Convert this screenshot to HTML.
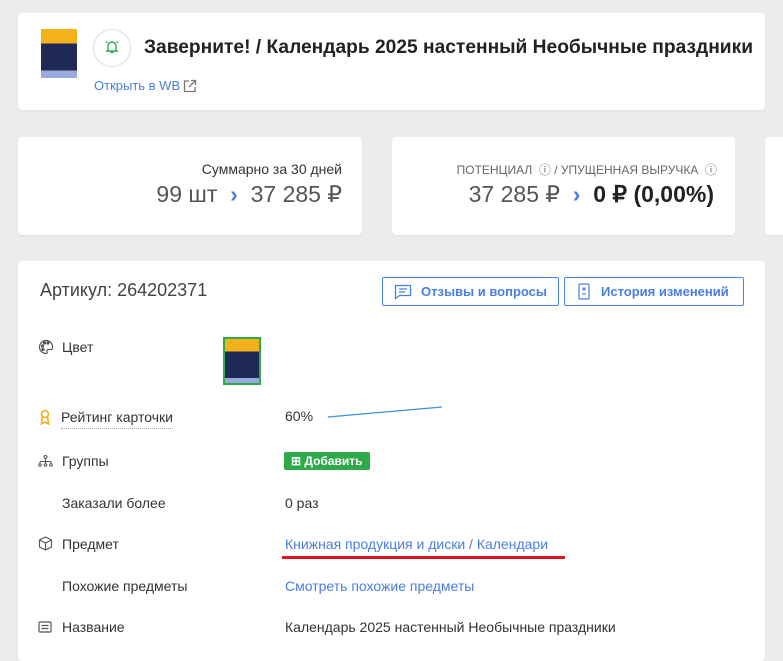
<!DOCTYPE html>
<html><head><meta charset="utf-8"><style>
body{margin:0;background:#ececec;font-family:"Liberation Sans",Arial,sans-serif;color:#333;width:783px;height:647px;overflow:hidden;position:relative}
.card{position:absolute;background:#fff;border-radius:4px;box-shadow:0 1px 2px rgba(0,0,0,.06)}
.a{position:absolute;white-space:nowrap}
.lbl{font-size:14px;color:#333}
.btn{position:absolute;height:29px;border:1px solid #4a86e8;border-radius:2px;color:#4a7ee0;font-weight:bold;font-size:13px;box-sizing:border-box;display:flex;align-items:center}
.cover{position:absolute;background:linear-gradient(#f3b21b 0 30%,#1e2a55 30% 85%,#9ad 85%)}
</style></head><body>
<div class="card" style="left:18px;top:13px;width:747px;height:97px"></div>
<div class="cover" style="left:41px;top:29px;width:36px;height:49px"></div>
<div class="a" style="left:93px;top:29px;width:38px;height:38px;border:1px solid #ddd;border-radius:50%;box-sizing:border-box"></div>
<svg class="a" style="left:104px;top:39px" width="16" height="16" viewBox="0 0 16 16" fill="none" stroke="#2eaa4a" stroke-width="1.4"><path d="M4 11V7a4 4 0 0 1 8 0v4l1 1H3z M6.5 13.5h3 M2 4l1.5-1.5 M14 4l-1.5-1.5"/></svg>
<div class="a" style="left:144px;top:37px;font-size:19.2px;font-weight:bold;color:#222">Заверните! / Календарь 2025 настенный Необычные праздники</div>
<div class="a" style="left:94px;top:78px;font-size:13px;color:#4a7ee0">Открыть в WB</div>
<svg class="a" style="left:183px;top:79px" width="14" height="14" viewBox="0 0 14 14" fill="none" stroke="#777" stroke-width="1.3"><path d="M6 2H1.5v10.5H12V8 M8 1.5h4.5V6 M12.5 1.5L6 8"/></svg>

<div class="card" style="left:18px;top:137px;width:344px;height:98px"></div>
<div class="a" style="right:441px;top:161px;font-size:14px">Суммарно за 30 дней</div>
<div class="a" style="right:441px;top:181px;font-size:23px;color:#555">99 шт <span style="color:#4a7ee0;font-weight:bold">&nbsp;›&nbsp;</span> 37 285 ₽</div>

<div class="card" style="left:392px;top:137px;width:343px;height:98px"></div>
<div class="a" style="right:66px;top:161px;font-size:12px;color:#666">ПОТЕНЦИАЛ &nbsp;ⓘ / УПУЩЕННАЯ ВЫРУЧКА &nbsp;ⓘ</div>
<div class="a" style="right:69px;top:181px;font-size:23px;color:#555">37 285 ₽ <span style="color:#4a7ee0;font-weight:bold">&nbsp;›&nbsp;</span> <b style="color:#222">0 ₽ (0,00%)</b></div>
<div class="card" style="left:765px;top:137px;width:30px;height:98px"></div>

<div class="card" style="left:18px;top:261px;width:747px;height:400px"></div>
<div class="a" style="left:40px;top:280px;font-size:18px;color:#444">Артикул: 264202371</div>
<div class="btn" style="left:382px;top:277px;width:177px;padding-left:11px"><svg width="18" height="16" viewBox="0 0 18 16" fill="none" stroke="#4a7ee0" stroke-width="1.3"><path d="M1.5 1.5h15v10h-11l-4 3z M5 5h8 M5 8h6"/></svg><span style="margin-left:9px">Отзывы и вопросы</span></div>
<div class="btn" style="left:564px;top:277px;width:180px;padding-left:13px"><svg width="12" height="17" viewBox="0 0 12 17" fill="none" stroke="#4a7ee0" stroke-width="1.2"><rect x="1" y="1" width="10" height="15" rx="1"/><path d="M4 6h4M6 4v4M4 11h4"/></svg><span style="margin-left:11px">История изменений</span></div>

<svg class="a" style="left:38px;top:339px" width="16" height="16" viewBox="0 0 16 16" fill="none" stroke="#555" stroke-width="1.2"><path d="M8 1.5a6.5 6.5 0 1 0 0 13c1.2 0 1.5-1 1-2s0-2 1.5-2H13a1.5 1.5 0 0 0 1.5-1.5A6.5 6.5 0 0 0 8 1.5z"/><circle cx="4.5" cy="7" r="1" fill="#555"/><circle cx="6.5" cy="4" r="1" fill="#555"/><circle cx="10" cy="4" r="1" fill="#555"/><circle cx="5" cy="10.5" r="1" fill="#555"/></svg>
<div class="a lbl" style="left:62px;top:339px">Цвет</div>
<div class="cover" style="left:223px;top:337px;width:38px;height:48px;outline:2px solid #2eaa4a;outline-offset:-2px"></div>

<svg class="a" style="left:40px;top:409px" width="10" height="16" viewBox="0 0 10 16" fill="none" stroke="#f2b01e" stroke-width="1.6"><circle cx="5" cy="5" r="3.5"/><path d="M2.5 8l-1 7 3.5-2 3.5 2-1-7"/></svg>
<div class="a lbl" style="left:61px;top:409px;border-bottom:1px dotted #aaa;padding-bottom:3px">Рейтинг карточки</div>
<div class="a lbl" style="left:285px;top:408px">60%</div>
<svg class="a" style="left:327px;top:405px" width="116" height="14"><path d="M1 12L115 2" stroke="#3d8fe0" stroke-width="1.3"/></svg>

<svg class="a" style="left:38px;top:455px" width="15" height="12" viewBox="0 0 15 12" fill="none" stroke="#555" stroke-width="1"><circle cx="7.5" cy="2" r="1.5"/><path d="M7.5 3.5v3M2 6.5h11M2 6.5v2M7.5 6.5v2M13 6.5v2"/><circle cx="2" cy="10" r="1.3"/><circle cx="7.5" cy="10" r="1.3"/><circle cx="13" cy="10" r="1.3"/></svg>
<div class="a lbl" style="left:62px;top:453px">Группы</div>
<div class="a" style="left:284px;top:452px;width:86px;height:18px;background:#2eaa4a;border-radius:2px;color:#fff;font-size:12px;font-weight:bold;line-height:18px;padding-left:7px;box-sizing:border-box">⊞ Добавить</div>

<div class="a lbl" style="left:62px;top:495px">Заказали более</div>
<div class="a lbl" style="left:285px;top:495px">0 раз</div>

<svg class="a" style="left:38px;top:536px" width="15" height="15" viewBox="0 0 15 15" fill="none" stroke="#555" stroke-width="1.1"><path d="M7.5 1l6 3v7l-6 3-6-3V4z M1.5 4l6 3 6-3 M7.5 7v7"/></svg>
<div class="a lbl" style="left:62px;top:536px">Предмет</div>
<div class="a lbl" style="left:285px;top:536px;color:#4a7ee0">Книжная продукция и диски / Календари</div>
<div class="a" style="left:282px;top:556px;width:283px;height:3px;background:#e0141e"></div>

<div class="a lbl" style="left:62px;top:578px">Похожие предметы</div>
<div class="a lbl" style="left:285px;top:578px;color:#4a7ee0">Смотреть похожие предметы</div>

<svg class="a" style="left:38px;top:621px" width="14" height="12" viewBox="0 0 14 12" fill="none" stroke="#555" stroke-width="1.2"><rect x="1" y="1" width="12" height="10" rx="1"/><path d="M3.5 4.5h7M3.5 7.5h7"/></svg>
<div class="a lbl" style="left:62px;top:619px">Название</div>
<div class="a lbl" style="left:285px;top:619px">Календарь 2025 настенный Необычные праздники</div>
</body></html>
